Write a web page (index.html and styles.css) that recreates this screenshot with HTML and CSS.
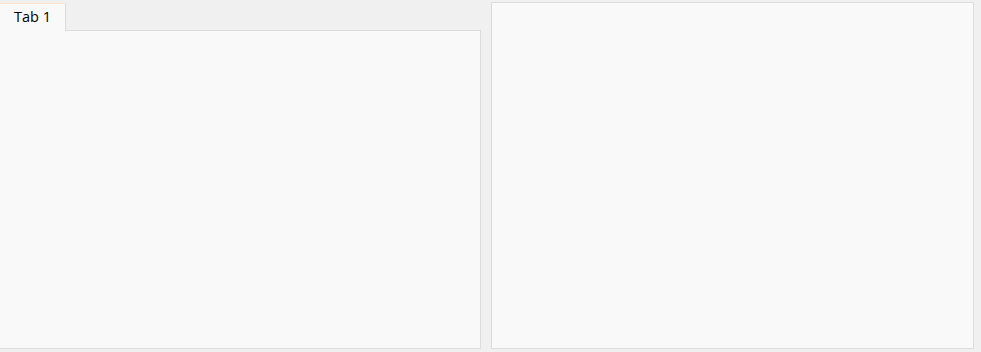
FILE: index.html
```html
<!DOCTYPE html>
<html>
<head>
<meta charset="utf-8">
<link rel="stylesheet" href="styles.css">
</head>
<body>
<div class="app">
  <div class="left">
    <div class="tabs">
      <div class="tab">Tab 1</div>
    </div>
    <div class="tabpanel"></div>
  </div>
  <div class="right"></div>
</div>
</body>
</html>
```

FILE: styles.css
```css
html, body {
  margin: 0;
  padding: 0;
  background: #f0f0f0;
  width: 981px;
  height: 352px;
  overflow: hidden;
  font-family: "Segoe UI", "Open Sans", "Noto Sans", sans-serif;
}
.app {
  display: flex;
  gap: 10px;
  height: 352px;
  box-sizing: border-box;
  padding: 2px 7px 3px 0;
}
.left {
  width: 481px;
  display: flex;
  flex-direction: column;
}
.tabs {
  display: flex;
  height: 28px;
  align-items: flex-end;
}
.tab {
  width: 66px;
  height: 28px;
  box-sizing: border-box;
  background: #f9f9f9;
  border-top: 1px solid #fde6cf;
  border-right: 1px solid #dcdcdc;
  font-size: 14.5px;
  color: #000;
  padding-left: 14px;
  line-height: 26px;
  margin-bottom: -1px;
  position: relative;
  z-index: 1;
}
.tabpanel {
  flex: 1;
  background: #f9f9f9;
  border: 1px solid #dcdcdc;
  border-left: none;
}
.right {
  flex: 1;
  background: #f9f9f9;
  border: 1px solid #dcdcdc;
}
```
